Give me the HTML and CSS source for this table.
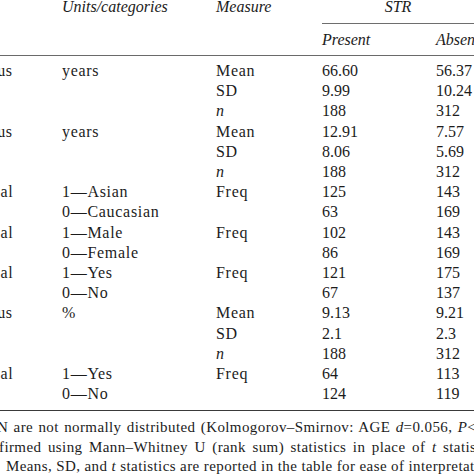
FILE: index.html
```html
<!DOCTYPE html>
<html lang="en">
<head>
<meta charset="utf-8">
<title>Table</title>
<link rel="stylesheet" href="styles.css">
</head>
<body>
<div class="page">
  <table class="data">
    <colgroup>
      <col class="c1"><col class="c2"><col class="c3"><col class="c4"><col class="c5">
    </colgroup>
    <thead>
      <tr class="h1">
        <th></th>
        <th class="it">Units/categories</th>
        <th class="it">Measure</th>
        <th class="it str" colspan="2">STR</th>
      </tr>
      <tr class="h2">
        <th></th>
        <th></th>
        <th></th>
        <th class="it">Present</th>
        <th class="it">Absent</th>
      </tr>
    </thead>
    <tbody>
      <tr class="first"><td class="w">Continuous</td><td class="w">years</td><td class="w">Mean</td><td>66.60</td><td>56.37</td></tr>
      <tr><td></td><td></td><td class="w">SD</td><td>9.99</td><td>10.24</td></tr>
      <tr><td></td><td></td><td class="it">n</td><td>188</td><td>312</td></tr>
      <tr><td class="w">Continuous</td><td class="w">years</td><td class="w">Mean</td><td>12.91</td><td>7.57</td></tr>
      <tr><td></td><td></td><td class="w">SD</td><td>8.06</td><td>5.69</td></tr>
      <tr><td></td><td></td><td class="it">n</td><td>188</td><td>312</td></tr>
      <tr><td class="w">Categorical</td><td class="w">1—Asian</td><td class="w">Freq</td><td>125</td><td>143</td></tr>
      <tr><td></td><td class="w">0—Caucasian</td><td></td><td>63</td><td>169</td></tr>
      <tr><td class="w">Categorical</td><td class="w">1—Male</td><td class="w">Freq</td><td>102</td><td>143</td></tr>
      <tr><td></td><td class="w">0—Female</td><td></td><td>86</td><td>169</td></tr>
      <tr><td class="w">Categorical</td><td class="w">1—Yes</td><td class="w">Freq</td><td>121</td><td>175</td></tr>
      <tr><td></td><td class="w">0—No</td><td></td><td>67</td><td>137</td></tr>
      <tr><td class="w">Continuous</td><td class="w">%</td><td class="w">Mean</td><td>9.13</td><td>9.21</td></tr>
      <tr><td></td><td></td><td class="w">SD</td><td>2.1</td><td>2.3</td></tr>
      <tr><td></td><td></td><td class="it">n</td><td>188</td><td>312</td></tr>
      <tr><td class="w">Categorical</td><td class="w">1—Yes</td><td class="w">Freq</td><td>64</td><td>113</td></tr>
      <tr class="last"><td></td><td class="w">0—No</td><td></td><td>124</td><td>119</td></tr>
    </tbody>
  </table>
  <div class="notes">
    <div class="note l1">N are not normally distributed (Kolmogorov–Smirnov: AGE <i>d</i>=0.056, <i>P</i>&lt;0.001).</div>
    <div class="note l2">firmed using Mann–Whitney U (rank sum) statistics in place of <i>t</i> statistics.</div>
    <div class="note l3">Means, SD, and <i>t</i> statistics are reported in the table for ease of interpretation.</div>
  </div>
</div>
</body>
</html>
```

FILE: styles.css
```css
html, body {
  margin: 0;
  padding: 0;
  background: #ffffff;
}

body {
  width: 474px;
  height: 474px;
  overflow: hidden;
  font-family: "Liberation Serif", "Times New Roman", serif;
  color: #1c1c1c;
}

.page {
  width: 474px;
  overflow: hidden;
}

.data {
  border-collapse: collapse;
  table-layout: fixed;
  width: 542px;
  margin-left: -68px;
  margin-top: -3px;
  font-size: 16px;
}

.c1 { width: 130px; }
.c2 { width: 154px; }
.c3 { width: 106px; }
.c4 { width: 114px; }
.c5 { width: 38px; }

.data th,
.data td {
  padding: 0;
  text-align: left;
  vertical-align: top;
  white-space: nowrap;
  font-weight: normal;
  line-height: 20.2px;
}

.data td.w {
  letter-spacing: 0.7px;
}

.it {
  font-style: italic;
}

.h1 th {
  padding-bottom: 6px;
  line-height: 20px;
}

.h1 th.str {
  text-align: center;
  border-bottom: 1px solid #6e6e6e;
}

.h2 th {
  padding-top: 6px;
  padding-bottom: 5px;
  line-height: 20px;
  border-bottom: 1.5px solid #6a6a6a;
}

.first td {
  padding-top: 5px;
}

.last td {
  padding-bottom: 5.5px;
  border-bottom: 1.5px solid #3a3a3a;
}

.notes {
  margin-top: 7.5px;
  font-size: 15px;
  line-height: 19.5px;
  letter-spacing: 0.4px;
}

.note {
  white-space: nowrap;
}

.l1 {
  margin-left: -3px;
  word-spacing: 1.2px;
}

.l2 {
  margin-left: -1px;
  word-spacing: 2.4px;
}

.l3 {
  margin-left: 6px;
  word-spacing: 0px;
}
```
